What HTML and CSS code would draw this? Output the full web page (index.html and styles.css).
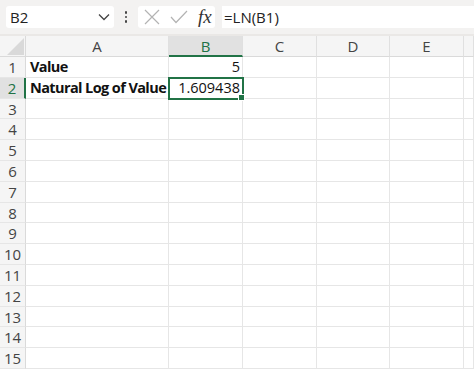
FILE: index.html
```html
<!DOCTYPE html>
<html lang="en">
<head>
    <meta charset="UTF-8">
    <title>Natural Log</title>
    <link rel="stylesheet" href="styles.css">
</head>
<body>
    <div class="toolbar">
        <div class="name-box">
            <span>B2</span>
            <svg class="chevron" width="12" height="8" viewBox="0 0 12 8"><path d="M1 1.5 L6 6.5 L11 1.5" fill="none" stroke="#444" stroke-width="1.3"/></svg>
        </div>
        <div class="dots"><i></i><i></i><i></i></div>
        <div class="actions">
            <svg width="16" height="16" viewBox="0 0 16 16"><path d="M1 1 L15 15 M15 1 L1 15" stroke="#b3b3b3" stroke-width="1.2"/></svg>
            <svg width="18" height="14" viewBox="0 0 18 14"><path d="M1 7 L6 12.5 L17 1" fill="none" stroke="#b3b3b3" stroke-width="1.2"/></svg>
            <span class="fx">fx</span>
        </div>
        <div class="formula">=LN(B1)</div>
    </div>

    <div class="sheet">
        <div class="corner"><span class="tri"></span></div>
        <div class="col-head">A</div>
        <div class="col-head active">B</div>
        <div class="col-head">C</div>
        <div class="col-head">D</div>
        <div class="col-head">E</div>
        <div class="col-head"></div>

        <div class="row-head">1</div>
        <div class="cell bold">Value</div>
        <div class="cell num">5</div>
        <div class="cell"></div><div class="cell"></div><div class="cell"></div><div class="cell"></div>

        <div class="row-head active">2</div>
        <div class="cell bold">Natural Log of Value</div>
        <div class="cell num selected">1.609438<span class="handle"></span></div>
        <div class="cell"></div><div class="cell"></div><div class="cell"></div><div class="cell"></div>

        <div class="row-head">3</div><div class="cell"></div><div class="cell"></div><div class="cell"></div><div class="cell"></div><div class="cell"></div><div class="cell"></div>
        <div class="row-head">4</div><div class="cell"></div><div class="cell"></div><div class="cell"></div><div class="cell"></div><div class="cell"></div><div class="cell"></div>
        <div class="row-head">5</div><div class="cell"></div><div class="cell"></div><div class="cell"></div><div class="cell"></div><div class="cell"></div><div class="cell"></div>
        <div class="row-head">6</div><div class="cell"></div><div class="cell"></div><div class="cell"></div><div class="cell"></div><div class="cell"></div><div class="cell"></div>
        <div class="row-head">7</div><div class="cell"></div><div class="cell"></div><div class="cell"></div><div class="cell"></div><div class="cell"></div><div class="cell"></div>
        <div class="row-head">8</div><div class="cell"></div><div class="cell"></div><div class="cell"></div><div class="cell"></div><div class="cell"></div><div class="cell"></div>
        <div class="row-head">9</div><div class="cell"></div><div class="cell"></div><div class="cell"></div><div class="cell"></div><div class="cell"></div><div class="cell"></div>
        <div class="row-head">10</div><div class="cell"></div><div class="cell"></div><div class="cell"></div><div class="cell"></div><div class="cell"></div><div class="cell"></div>
        <div class="row-head">11</div><div class="cell"></div><div class="cell"></div><div class="cell"></div><div class="cell"></div><div class="cell"></div><div class="cell"></div>
        <div class="row-head">12</div><div class="cell"></div><div class="cell"></div><div class="cell"></div><div class="cell"></div><div class="cell"></div><div class="cell"></div>
        <div class="row-head">13</div><div class="cell"></div><div class="cell"></div><div class="cell"></div><div class="cell"></div><div class="cell"></div><div class="cell"></div>
        <div class="row-head">14</div><div class="cell"></div><div class="cell"></div><div class="cell"></div><div class="cell"></div><div class="cell"></div><div class="cell"></div>
        <div class="row-head">15</div><div class="cell"></div><div class="cell"></div><div class="cell"></div><div class="cell"></div><div class="cell"></div><div class="cell"></div>
    </div>
</body>
</html>
```
FILE: styles.css
```css
body {
    margin: 0;
    font-family: 'Open Sans', 'Noto Sans', sans-serif;
    background: #fff;
    overflow: hidden;
}
.toolbar {
    display: flex;
    align-items: center;
    height: 34px;
    padding: 0 0 0 6px;
    background: #f3f2f1;
    border-bottom: 2px solid #eae8e6;
}
.name-box {
    width: 108px;
    height: 22px;
    box-sizing: border-box;
    background: #fff;
    border-radius: 3px;
    display: flex;
    align-items: center;
    justify-content: space-between;
    padding: 0 4px 0 4px;
    font-size: 15px;
    color: #222;
}
.dots {
    width: 24px;
    display: flex;
    flex-direction: column;
    align-items: center;
    gap: 2px;
}
.dots i {
    width: 2.5px;
    height: 2.5px;
    border-radius: 50%;
    background: #444;
}
.actions {
    width: 77px;
    height: 22px;
    background: #fff;
    border-radius: 3px;
    display: flex;
    align-items: center;
    gap: 10px;
    padding-left: 6px;
    box-sizing: border-box;
}
.fx {
    font-family: 'Liberation Serif', serif;
    font-style: italic;
    font-size: 19px;
    color: #333;
}
.formula {
    flex: 1;
    margin-left: 7px;
    height: 22px;
    background: #fff;
    display: flex;
    align-items: center;
    padding-left: 2px;
    font-size: 15px;
    color: #222;
}
.sheet {
    display: grid;
    grid-template-columns: 26px 143px 74px 74px 73px 74px 1fr;
    grid-template-rows: 21px repeat(15, 20.8px);
    background: #fff;
}
.corner {
    background: #f5f5f5;
    border-right: 1px solid #dadada;
    border-bottom: 1px solid #dadada;
    position: relative;
}
.tri {
    position: absolute;
    right: 1px;
    bottom: 1px;
    width: 0;
    height: 0;
    border-left: 17px solid transparent;
    border-bottom: 17px solid #d9d9d9;
}
.col-head {
    background: #f5f5f5;
    border-right: 1px solid #e0e0e0;
    border-bottom: 1px solid #dadada;
    text-align: center;
    font-size: 15px;
    line-height: 20px;
    color: #444;
}
.col-head.active {
    background: #e1e1e1;
    color: #217346;
    border-bottom: 2px solid #217346;
}
.row-head {
    background: #f5f5f5;
    border-right: 1px solid #dadada;
    border-bottom: 1px solid #e6e6e6;
    text-align: center;
    font-size: 15px;
    line-height: 20px;
    color: #444;
}
.row-head.active {
    background: #e1e1e1;
    color: #217346;
    border-right: 2px solid #217346;
}
.cell {
    border-right: 1px solid #e6e6e6;
    border-bottom: 1px solid #e6e6e6;
    font-size: 14.5px;
    line-height: 20px;
    color: #111;
    padding: 0 3px 0 4px;
    white-space: nowrap;
    position: relative;
}
.bold {
    font-weight: bold;
    letter-spacing: -0.6px;
}
.num {
    text-align: right;
    padding-right: 2px;
}
.selected {
    outline: 2px solid #217346;
    outline-offset: -1px;
    background: #fff;
    z-index: 1;
}
.handle {
    position: absolute;
    right: -3px;
    bottom: -3px;
    width: 5px;
    height: 5px;
    background: #217346;
    border: 1px solid #fff;
}
```
